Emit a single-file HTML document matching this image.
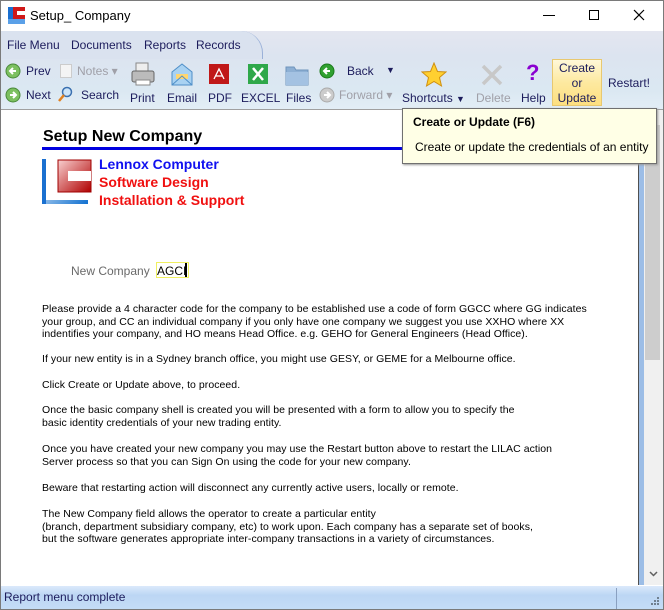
<!DOCTYPE html>
<html><head><style>
*{margin:0;padding:0;box-sizing:border-box}
body{width:664px;height:610px;position:relative;overflow:hidden;background:#fff;font-family:"Liberation Sans",sans-serif;}
.a{position:absolute;white-space:nowrap}
.tb{color:#1c1c5c;font-size:12px}
.gr{color:#a0a0a8;font-size:12px}
.p{font-size:10.5px;color:#000;line-height:12.5px;position:absolute;left:42px;white-space:nowrap;letter-spacing:0.05px}
</style></head><body>
<div class="a" style="left:0;top:0;width:664px;height:610px;border:1px solid #7a7a7a"></div>
<div class="a" style="left:1px;top:1px;width:662px;height:30px;background:#fff"></div>
<svg class="a" style="left:8px;top:7px" width="18" height="18"><rect x="0" y="0" width="5" height="17" fill="#1a6fd0"/><rect x="0" y="12" width="17" height="5" fill="#5aa0e8"/><rect x="5" y="0" width="12" height="12" fill="#d01818"/><rect x="9" y="4" width="8" height="4" fill="#fff"/></svg>
<div class="a" style="left:30px;top:8px;font-size:13px;color:#000">Setup_ Company</div>
<div class="a" style="left:543px;top:15px;width:12px;height:1px;background:#000"></div>
<div class="a" style="left:589px;top:10px;width:10px;height:10px;border:1px solid #000"></div>
<svg class="a" style="left:633px;top:9px" width="12" height="12"><path d="M1 1L11 11M11 1L1 11" stroke="#000" stroke-width="1.2"/></svg>
<div class="a" style="left:1px;top:31px;width:662px;height:79px;background:linear-gradient(#e4e6f0 0,#dce4f0 25px,#dbe8f2 60px,#e3eef6 79px)"></div>
<div class="a" style="left:1px;top:31px;width:262px;height:28px;background:#dae2ef;border-top-right-radius:22px;border-right:1px solid #9ab0d8"></div>
<div class="a tb" style="left:7px;top:38px">File Menu</div>
<div class="a tb" style="left:71px;top:38px">Documents</div>
<div class="a tb" style="left:144px;top:38px">Reports</div>
<div class="a tb" style="left:196px;top:38px">Records</div>
<svg class="a" style="left:5px;top:63px" width="16" height="16"><circle cx="8" cy="8" r="7" fill="#7cc060" stroke="#4a8a3a"/><path d="M11 8H5M8 5L5 8L8 11" stroke="#fff" stroke-width="2" fill="none"/></svg>
<div class="a tb" style="left:26px;top:64px">Prev</div>
<div class="a" style="left:60px;top:64px;width:12px;height:14px;background:#f4f4f4;border:1px solid #ccc"></div>
<div class="a gr" style="left:77px;top:64px">Notes ▾</div>
<svg class="a" style="left:5px;top:87px" width="16" height="16"><circle cx="8" cy="8" r="7" fill="#7cc060" stroke="#4a8a3a"/><path d="M5 8H11M8 5L11 8L8 11" stroke="#fff" stroke-width="2" fill="none"/></svg>
<div class="a tb" style="left:26px;top:88px">Next</div>
<svg class="a" style="left:57px;top:86px" width="16" height="16"><circle cx="10" cy="6" r="4.5" fill="#cde4f8" stroke="#3a70b0" stroke-width="1.5"/><path d="M7 9L2 15" stroke="#e08020" stroke-width="2.5"/></svg>
<div class="a tb" style="left:81px;top:88px">Search</div>
<svg class="a" style="left:130px;top:62px" width="26" height="26"><rect x="6" y="1" width="12" height="8" fill="#eee" stroke="#888"/><rect x="2" y="9" width="22" height="11" rx="2" fill="#bbb" stroke="#666"/><rect x="6" y="18" width="14" height="5" fill="#fff" stroke="#888"/></svg>
<div class="a tb" style="left:130px;top:91px">Print</div>
<svg class="a" style="left:170px;top:62px" width="24" height="26"><path d="M2 10L12 2L22 10V23H2Z" fill="#a9d2f2" stroke="#4f8fc8"/><path d="M6 12H18V17H6Z" fill="#ffd670"/><path d="M2 23L12 14L22 23" stroke="#4f8fc8" fill="none"/></svg>
<div class="a tb" style="left:167px;top:91px">Email</div>
<svg class="a" style="left:209px;top:64px" width="20" height="20"><rect width="20" height="20" fill="#c01818"/><path d="M5 15L10 5L15 15M7 12H13" stroke="#fff" stroke-width="1.3" fill="none"/></svg>
<div class="a tb" style="left:208px;top:91px">PDF</div>
<svg class="a" style="left:248px;top:64px" width="20" height="20"><rect width="20" height="20" fill="#2fa84a"/><path d="M5 4L15 16M15 4L5 16" stroke="#fff" stroke-width="2.5"/></svg>
<div class="a tb" style="left:241px;top:91px">EXCEL</div>
<svg class="a" style="left:285px;top:64px" width="24" height="22"><path d="M1 3H9L11 6H23V21H1Z" fill="#8eb0d4" stroke="#6f94bc"/><rect x="1" y="8" width="22" height="13" fill="#a4c2e2"/></svg>
<div class="a tb" style="left:286px;top:91px">Files</div>
<svg class="a" style="left:319px;top:63px" width="16" height="16"><circle cx="8" cy="8" r="7" fill="#30a030" stroke="#1a7a1a"/><path d="M11 8H5M8 5L5 8L8 11" stroke="#fff" stroke-width="2" fill="none"/></svg>
<div class="a tb" style="left:347px;top:64px">Back</div>
<div class="a tb" style="left:386px;top:65px;font-size:9px">▼</div>
<svg class="a" style="left:319px;top:87px" width="16" height="16"><circle cx="8" cy="8" r="7" fill="#ccc" stroke="#aaa"/><path d="M5 8H11M8 5L11 8L8 11" stroke="#fff" stroke-width="2" fill="none"/></svg>
<div class="a gr" style="left:339px;top:88px">Forward ▾</div>
<svg class="a" style="left:421px;top:62px" width="26" height="26"><path d="M13 1L16.5 9.5L25 10L18.5 15.5L20.5 24L13 19.5L5.5 24L7.5 15.5L1 10L9.5 9.5Z" fill="#ffd030" stroke="#d09010"/></svg>
<div class="a tb" style="left:402px;top:91px">Shortcuts <span style="font-size:9px">▼</span></div>
<svg class="a" style="left:481px;top:64px" width="22" height="22"><path d="M2 2L20 20M20 2L2 20" stroke="#c8c8c8" stroke-width="3.5"/></svg>
<div class="a gr" style="left:476px;top:91px">Delete</div>
<div class="a" style="left:526px;top:60px;font-size:22px;font-weight:bold;color:#8a00d0">?</div>
<div class="a tb" style="left:521px;top:91px">Help</div>
<div class="a" style="left:552px;top:59px;width:50px;height:47px;border:1px solid #e8c870;background:linear-gradient(#fff8d8,#fde9a0 50%,#fddf80)"></div>
<div class="a tb" style="left:552px;top:61px;width:50px;text-align:center;line-height:15px;white-space:normal">Create<br>or<br>Update</div>
<div class="a tb" style="left:608px;top:76px">Restart!</div>
<div class="a" style="left:1px;top:109px;width:662px;height:1px;background:#a0a0a0"></div>
<div class="a" style="left:638px;top:110px;width:1px;height:475px;background:#505050"></div>
<div class="a" style="left:639px;top:110px;width:5px;height:475px;background:#9cbde6"></div>
<div class="a" style="left:644px;top:110px;width:19px;height:475px;background:#f0f0f0"></div>
<div class="a" style="left:645px;top:125px;width:15px;height:235px;background:#cdcdcd"></div>
<svg class="a" style="left:649px;top:571px" width="9" height="6"><path d="M1 1L4.5 4.5L8 1" stroke="#606060" stroke-width="1.5" fill="none"/></svg>
<div class="a" style="left:43px;top:128px;font-size:16px;font-weight:bold;color:#000">Setup New Company</div>
<div class="a" style="left:42px;top:147px;width:596px;height:3px;background:#0000e0"></div>
<svg class="a" style="left:42px;top:159px" width="50" height="46"><defs><linearGradient id="g" x1="0" y1="0" x2="1" y2="1"><stop offset="0" stop-color="#fff"/><stop offset="1" stop-color="#1070d0"/></linearGradient><linearGradient id="r" x1="0" y1="0" x2="1" y2="1"><stop offset="0" stop-color="#f8d0d0"/><stop offset="1" stop-color="#b00000"/></linearGradient></defs><rect x="0" y="0" width="46" height="45" fill="url(#g)"/><rect x="4" y="0" width="42" height="41" fill="#fff"/><rect x="0" y="0" width="4" height="45" fill="#1a70d0"/><rect x="16" y="1" width="33" height="32" fill="url(#r)" stroke="#a00000"/><rect x="26" y="12" width="23" height="10" fill="#fff"/></svg>
<div class="a" style="left:99px;top:156px;font-size:14px;font-weight:bold;color:#1010f0">Lennox Computer</div>
<div class="a" style="left:99px;top:174px;font-size:14px;font-weight:bold;color:#f01010">Software Design</div>
<div class="a" style="left:99px;top:192px;font-size:14px;font-weight:bold;color:#f01010">Installation &amp; Support</div>
<div class="a" style="left:71px;top:264px;font-size:12px;color:#6a6a6a">New Company</div>
<div class="a" style="left:156px;top:262px;width:33px;height:16px;border:1px solid #f0f060"></div>
<div class="a" style="left:157px;top:264px;font-size:12px;color:#000">AGCI</div>
<div class="a" style="left:185px;top:263px;width:2px;height:14px;background:#000"></div>
<div class="p" style="top:303px">Please provide a 4 character code for the company to be established use a code of form GGCC where GG indicates<br>your group, and CC an individual company if you only have one company we suggest you use XXHO where XX<br>indentifies your company, and HO means Head Office. e.g. GEHO for General Engineers (Head Office).</div>
<div class="p" style="top:353px">If your new entity is in a Sydney branch office, you might use GESY, or GEME for a Melbourne office.</div>
<div class="p" style="top:379px">Click Create or Update above, to proceed.</div>
<div class="p" style="top:404px">Once the basic company shell is created you will be presented with a form to allow you to specify the<br>basic identity credentials of your new trading entity.</div>
<div class="p" style="top:443px">Once you have created your new company you may use the Restart button above to restart the LILAC action<br>Server process so that you can Sign On using the code for your new company.</div>
<div class="p" style="top:482px">Beware that restarting action will disconnect any currently active users, locally or remote.</div>
<div class="p" style="top:508px">The New Company field allows the operator to create a particular entity<br>(branch, department subsidiary company, etc) to work upon. Each company has a separate set of books,<br>but the software generates appropriate inter-company transactions in a variety of circumstances.</div>
<div class="a" style="left:402px;top:108px;width:255px;height:56px;background:#ffffe6;border:1px solid #707070;box-shadow:1px 1px 2px #999"></div>
<div class="a" style="left:413px;top:115px;font-size:12px;font-weight:bold;color:#000">Create or Update (F6)</div>
<div class="a" style="left:415px;top:140px;font-size:12px;color:#000">Create or update the credentials of an entity</div>
<div class="a" style="left:1px;top:586px;width:662px;height:23px;background:linear-gradient(#dbe9fb,#bcd6f4 40%,#c4dcf6)"></div>
<div class="a" style="left:616px;top:588px;width:1px;height:21px;background:#8aa0c0"></div>
<div class="a" style="left:4px;top:590px;font-size:12px;color:#1c1c5c">Report menu complete</div>
<svg class="a" style="left:650px;top:596px" width="10" height="10"><g fill="#708090"><rect x="7" y="1" width="2" height="2"/><rect x="4" y="4" width="2" height="2"/><rect x="7" y="4" width="2" height="2"/><rect x="1" y="7" width="2" height="2"/><rect x="4" y="7" width="2" height="2"/><rect x="7" y="7" width="2" height="2"/></g></svg>
</body></html>
